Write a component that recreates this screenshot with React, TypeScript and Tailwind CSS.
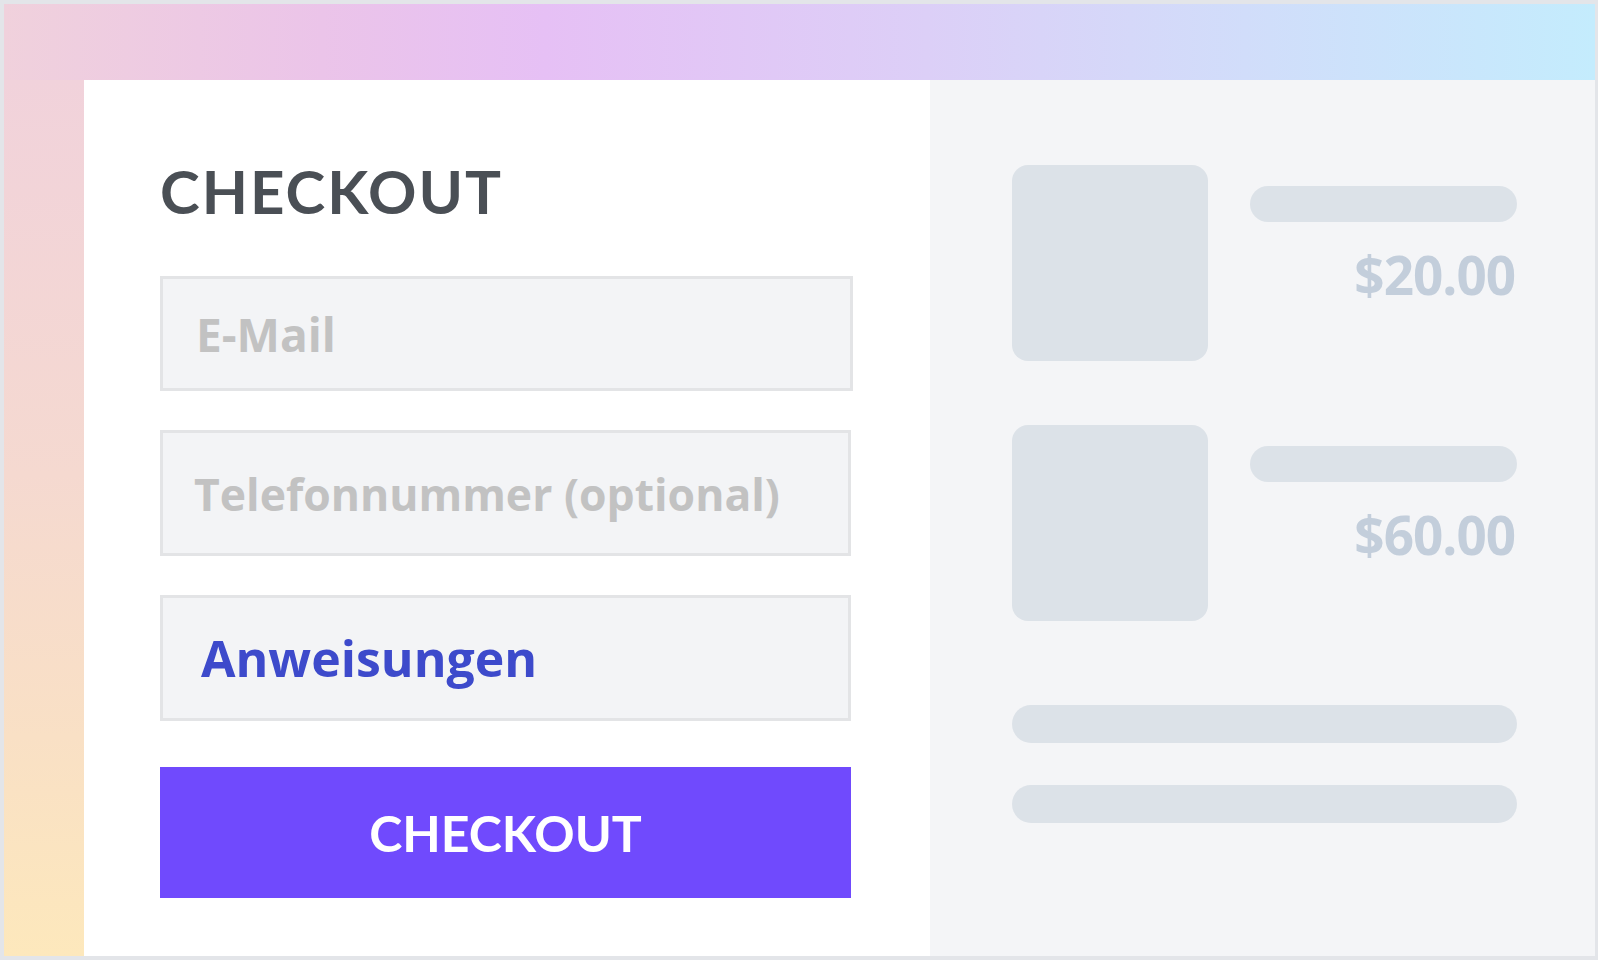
import React from 'react';

const sans = { fontFamily: '"Open Sans", "Noto Sans", sans-serif' };

const OrderItem = ({ price }: { price: string }) => (
  <div className="flex">
    <div className="h-[196px] w-[196px] shrink-0 rounded-2xl bg-[#dce2e8]" />
    <div className="ml-[42px] flex flex-1 flex-col pt-[21px]">
      <div className="h-[36px] rounded-full bg-[#dce2e8]" />
      <p
        className="mt-[26px] text-right text-[53px] font-bold leading-none tracking-[-1px] text-[#c3cedb] pr-[2px]"
        style={sans}
      >
        {price}
      </p>
    </div>
  </div>
);

const App = () => {
  return (
    <div className="h-screen w-full bg-[#e3e5e9] pt-[4px] pb-[4px] pl-[4px] pr-[3px]">
      <div className="flex h-full flex-col">
        <div className="h-[76px] shrink-0 bg-[linear-gradient(90deg,#f0d1dc_0%,#ebc4e9_20%,#e6c0f5_34%,#dccff7_58%,#d1ddfa_78%,#c4ecfd_100%)]" />

        <div className="flex flex-1">
          <div className="w-[80px] shrink-0 bg-[linear-gradient(180deg,#f1d2db_0%,#f5d9d0_45%,#f9e0c5_75%,#fde8bc_100%)]" />

          {/* form */}
          <main className="w-[846px] shrink-0 bg-white pl-[76px] pt-[81px]">
            <h1
              className="text-[60px] font-bold leading-[60px] tracking-[2px] text-[#4a4f55]"
              style={{ fontFamily: 'Lato, "Open Sans", sans-serif' }}
            >
              CHECKOUT
            </h1>

            <div className="mt-[55px] flex w-[693px] flex-col">
              <input
                type="email"
                placeholder="E-Mail"
                className="h-[115px] w-[693px] border-[3px] border-[#e3e4e6] bg-[#f3f4f6] pl-[33px] text-[46px] font-bold text-[#4a4f55] outline-none placeholder:text-[#c2c2c2]"
                style={sans}
              />
              <input
                type="tel"
                placeholder="Telefonnummer (optional)"
                className="mt-[39px] h-[126px] w-[691px] border-[3px] border-[#e3e4e6] bg-[#f3f4f6] pl-[31px] text-[44.5px] font-bold text-[#4a4f55] outline-none placeholder:text-[#c2c2c2]"
                style={sans}
              />
              <div
                className="mt-[39px] flex h-[126px] w-[691px] items-center border-[3px] border-[#e3e4e6] bg-[#f3f4f6] pl-[38px] text-[50px] font-bold leading-none text-[#3d4acb]"
                style={sans}
              >
                Anweisungen
              </div>
              <button
                className="mt-[46px] flex h-[131px] w-[691px] items-center justify-center bg-[#704afd] text-[50px] font-bold leading-none text-white"
                style={{ fontFamily: 'Lato, "Open Sans", sans-serif' }}
              >
                CHECKOUT
              </button>
            </div>
          </main>

          {/* order summary */}
          <aside className="flex-1 bg-[#f4f5f7] pl-[82px] pr-[78px] pt-[85px]">
            <div className="flex flex-col gap-[64px]">
              <OrderItem price="$20.00" />
              <OrderItem price="$60.00" />
            </div>
            <div className="mt-[84px] flex flex-col gap-[42px]">
              <div className="h-[38px] rounded-full bg-[#dce2e8]" />
              <div className="h-[38px] rounded-full bg-[#dce2e8]" />
            </div>
          </aside>
        </div>
      </div>
    </div>
  );
};

export default App;
